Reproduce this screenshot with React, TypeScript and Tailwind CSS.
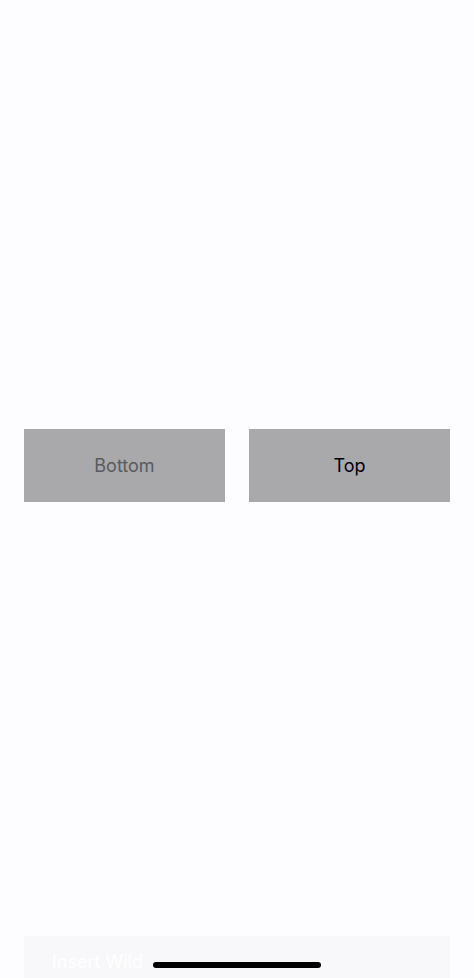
import React from "react";

export default function App() {
  return (
    <div className="relative flex h-[978px] w-[474px] flex-col overflow-hidden bg-[#fdfcfe]" style={{ fontFamily: "Inter, 'Noto Sans', sans-serif" }}>
      <div className="h-[429px]" />
      <div className="flex gap-[24px] px-[24px]">
        <button className="flex h-[73px] w-[201px] items-center justify-center bg-[#a9a8aa] text-[18px] text-[#5b5a5c]">Bottom</button>
        <button className="flex h-[73px] w-[201px] items-center justify-center bg-[#a9a8aa] text-[18px] text-black">Top</button>
      </div>
      <div className="flex-1" />
      <div className="mx-[24px] flex h-[42px] items-start bg-[#f8f7f9] px-[28px] pt-[12px]">
        <span className="text-[18px] text-white">Insert Wild</span>
      </div>
      <div className="absolute bottom-[10px] left-[153px] h-[6px] w-[168px] rounded-full bg-black" />
    </div>
  );
}
